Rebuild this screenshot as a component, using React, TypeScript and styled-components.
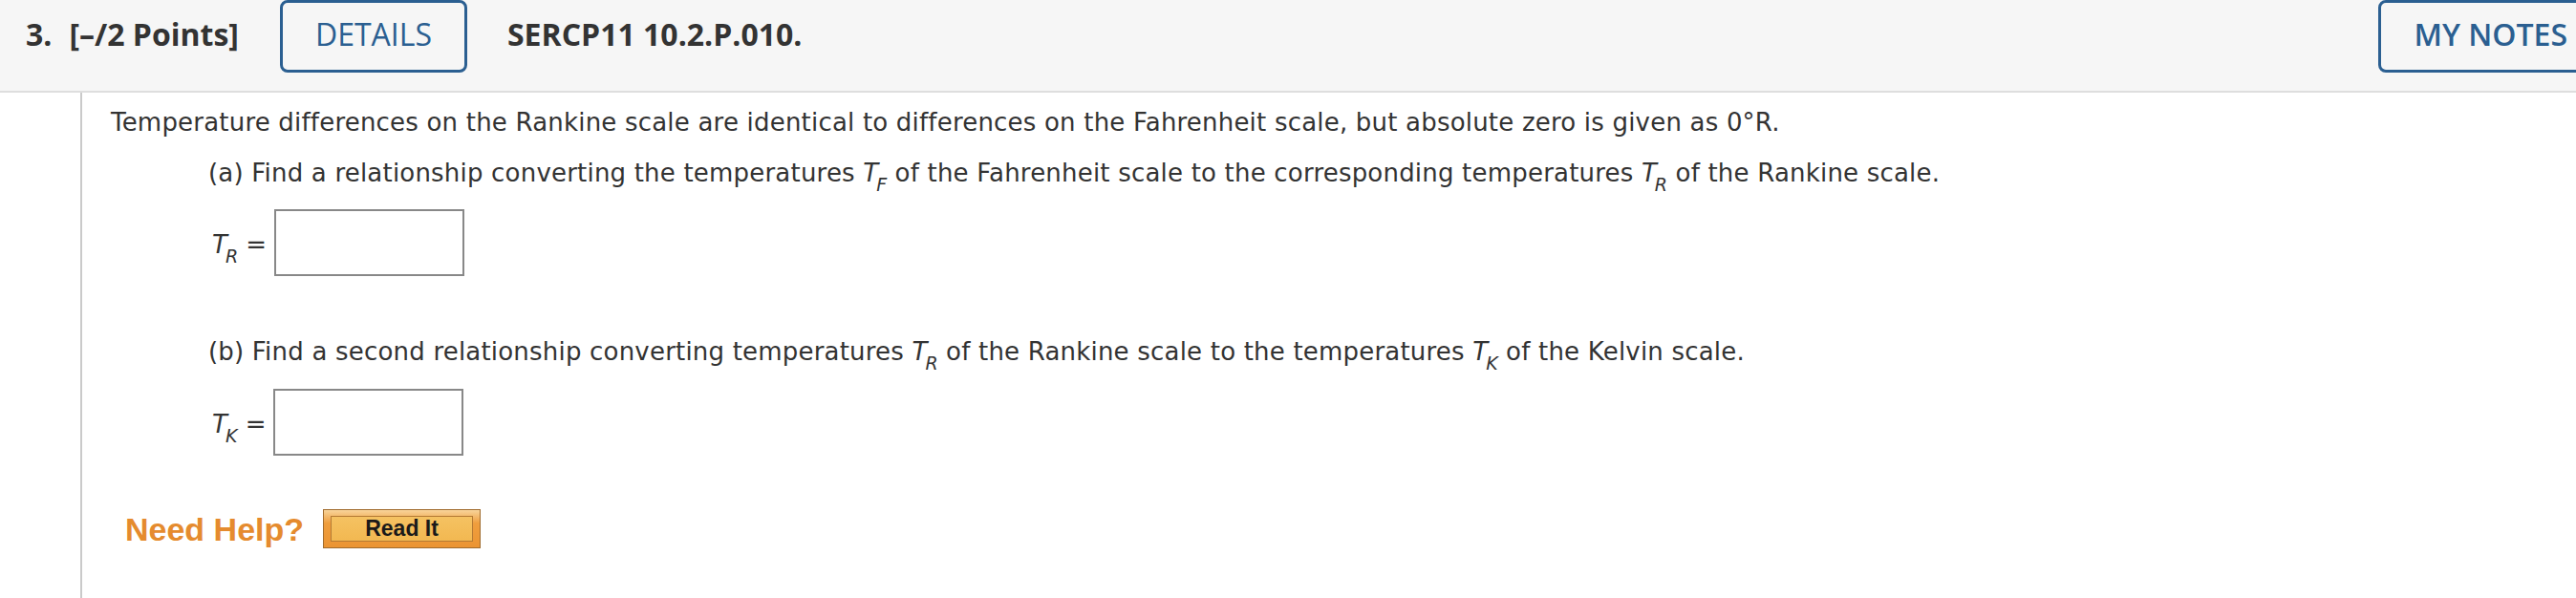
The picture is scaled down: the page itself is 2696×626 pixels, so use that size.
import styled, { createGlobalStyle } from "styled-components";

const GlobalStyle = createGlobalStyle`
  html, body {
    margin: 0;
    padding: 0;
    background: #fff;
    overflow: hidden;
  }
  body {
    font-family: "DejaVu Sans", Verdana, sans-serif;
    color: #333;
  }
`;

const Page = styled.div`
  width: 2696px;
  height: 626px;
  overflow: hidden;
  display: flex;
  flex-direction: column;
`;

const Header = styled.header`
  flex: none;
  box-sizing: border-box;
  height: 97px;
  background: #f6f6f6;
  border-bottom: 2px solid #dedede;
  display: flex;
  align-items: flex-start;
  padding-left: 27px;
  font-family: "Open Sans", sans-serif;
  font-size: 32px;
  color: #333;
`;

const HeaderText = styled.span<{ $gap?: number }>`
  height: 76px;
  line-height: 71px;
  font-weight: 700;
  white-space: nowrap;
  margin-left: ${(p) => p.$gap ?? 0}px;
`;

const Number = styled.span`
  margin-right: 18px;
`;

const OutlineButton = styled.button<{ $strong?: boolean; $gap?: number }>`
  box-sizing: border-box;
  height: 76px;
  padding: 0 34px 5px;
  margin-left: ${(p) => p.$gap ?? 0}px;
  border: 3px solid #2b5f91;
  border-radius: 8px;
  background: transparent;
  color: #2b5f91;
  font-family: "Open Sans", sans-serif;
  font-size: 32px;
  font-weight: ${(p) => (p.$strong ? 600 : 400)};
  line-height: 65px;
  white-space: nowrap;
  cursor: pointer;
`;

const NotesButton = styled(OutlineButton)`
  margin-left: auto;
  margin-right: -28px;
`;

const Main = styled.main`
  flex: 1;
  margin-left: 84px;
  border-left: 2px solid #cacaca;
  padding: 16px 0 0 30px;
`;

const Prompt = styled.p<{ $gap: number; $indent?: boolean }>`
  margin: ${(p) => p.$gap}px 0 0 ${(p) => (p.$indent ? 102 : 0)}px;
  font-size: 26px;
  line-height: 30px;
  letter-spacing: 0.2px;
  white-space: nowrap;
`;

const Var = styled.span`
  font-style: italic;
  letter-spacing: 0;
`;

const Sub = styled.sub`
  font-size: 19px;
  line-height: 0;
  vertical-align: -10px;
  margin-left: -2px;
`;

const AnswerRow = styled.div<{ $gap: number }>`
  display: flex;
  align-items: center;
  margin: ${(p) => p.$gap}px 0 0 106px;
`;

const AnswerLabel = styled.label`
  font-size: 26px;
  line-height: 30px;
  padding-top: 4px;
  white-space: nowrap;
`;

const AnswerBox = styled.input`
  box-sizing: border-box;
  width: 199px;
  height: 70px;
  margin: 0 0 0 8px;
  border: 2px solid #888;
  border-radius: 0;
  background: #fff;
  outline: none;
`;

const HelpRow = styled.div`
  display: flex;
  align-items: center;
  gap: 20px;
  margin: 56px 0 0 15px;
`;

const HelpLabel = styled.span`
  font-family: "Liberation Sans", Arial, sans-serif;
  font-weight: 700;
  font-size: 34px;
  line-height: 38px;
  color: #e58b2e;
`;

const ReadItButton = styled.button`
  box-sizing: border-box;
  width: 165px;
  height: 41px;
  padding: 6px 7px;
  border: 1px solid #a06b2d;
  background: linear-gradient(#f8d49a, #ef9e3e 35%, #eb9432);
  display: flex;
  cursor: pointer;
`;

const ReadItFace = styled.span`
  flex: 1;
  display: flex;
  align-items: center;
  justify-content: center;
  border: 1px solid #b47a34;
  background: linear-gradient(#f5c262, #f2b851);
  font-family: "Liberation Sans", Arial, sans-serif;
  font-weight: 700;
  font-size: 23px;
  color: #1a1a1a;
`;

export default function App() {
  return (
    <>
      <GlobalStyle />
      <Page>
        <Header>
          <HeaderText>
            <Number>3.</Number>[–/2 Points]
          </HeaderText>
          <OutlineButton $gap={43}>DETAILS</OutlineButton>
          <HeaderText $gap={42}>SERCP11 10.2.P.010.</HeaderText>
          <NotesButton $strong>MY NOTES</NotesButton>
        </Header>
        <Main>
          <Prompt $gap={0}>
            Temperature differences on the Rankine scale are identical to differences on the
            Fahrenheit scale, but absolute zero is given as 0°R.
          </Prompt>
          <Prompt $gap={23} $indent>
            (a) Find a relationship converting the temperatures{" "}
            <Var>
              T<Sub>F</Sub>
            </Var>{" "}
            of the Fahrenheit scale to the corresponding temperatures{" "}
            <Var>
              T<Sub>R</Sub>
            </Var>{" "}
            of the Rankine scale.
          </Prompt>
          <AnswerRow $gap={23}>
            <AnswerLabel>
              <Var>
                T<Sub>R</Sub>
              </Var>{" "}
              =
            </AnswerLabel>
            <AnswerBox type="text" aria-label="T_R" />
          </AnswerRow>
          <Prompt $gap={64} $indent>
            (b) Find a second relationship converting temperatures{" "}
            <Var>
              T<Sub>R</Sub>
            </Var>{" "}
            of the Rankine scale to the temperatures{" "}
            <Var>
              T<Sub>K</Sub>
            </Var>{" "}
            of the Kelvin scale.
          </Prompt>
          <AnswerRow $gap={24}>
            <AnswerLabel>
              <Var>
                T<Sub>K</Sub>
              </Var>{" "}
              =
            </AnswerLabel>
            <AnswerBox type="text" aria-label="T_K" />
          </AnswerRow>
          <HelpRow>
            <HelpLabel>Need Help?</HelpLabel>
            <ReadItButton>
              <ReadItFace>Read It</ReadItFace>
            </ReadItButton>
          </HelpRow>
        </Main>
      </Page>
    </>
  );
}
